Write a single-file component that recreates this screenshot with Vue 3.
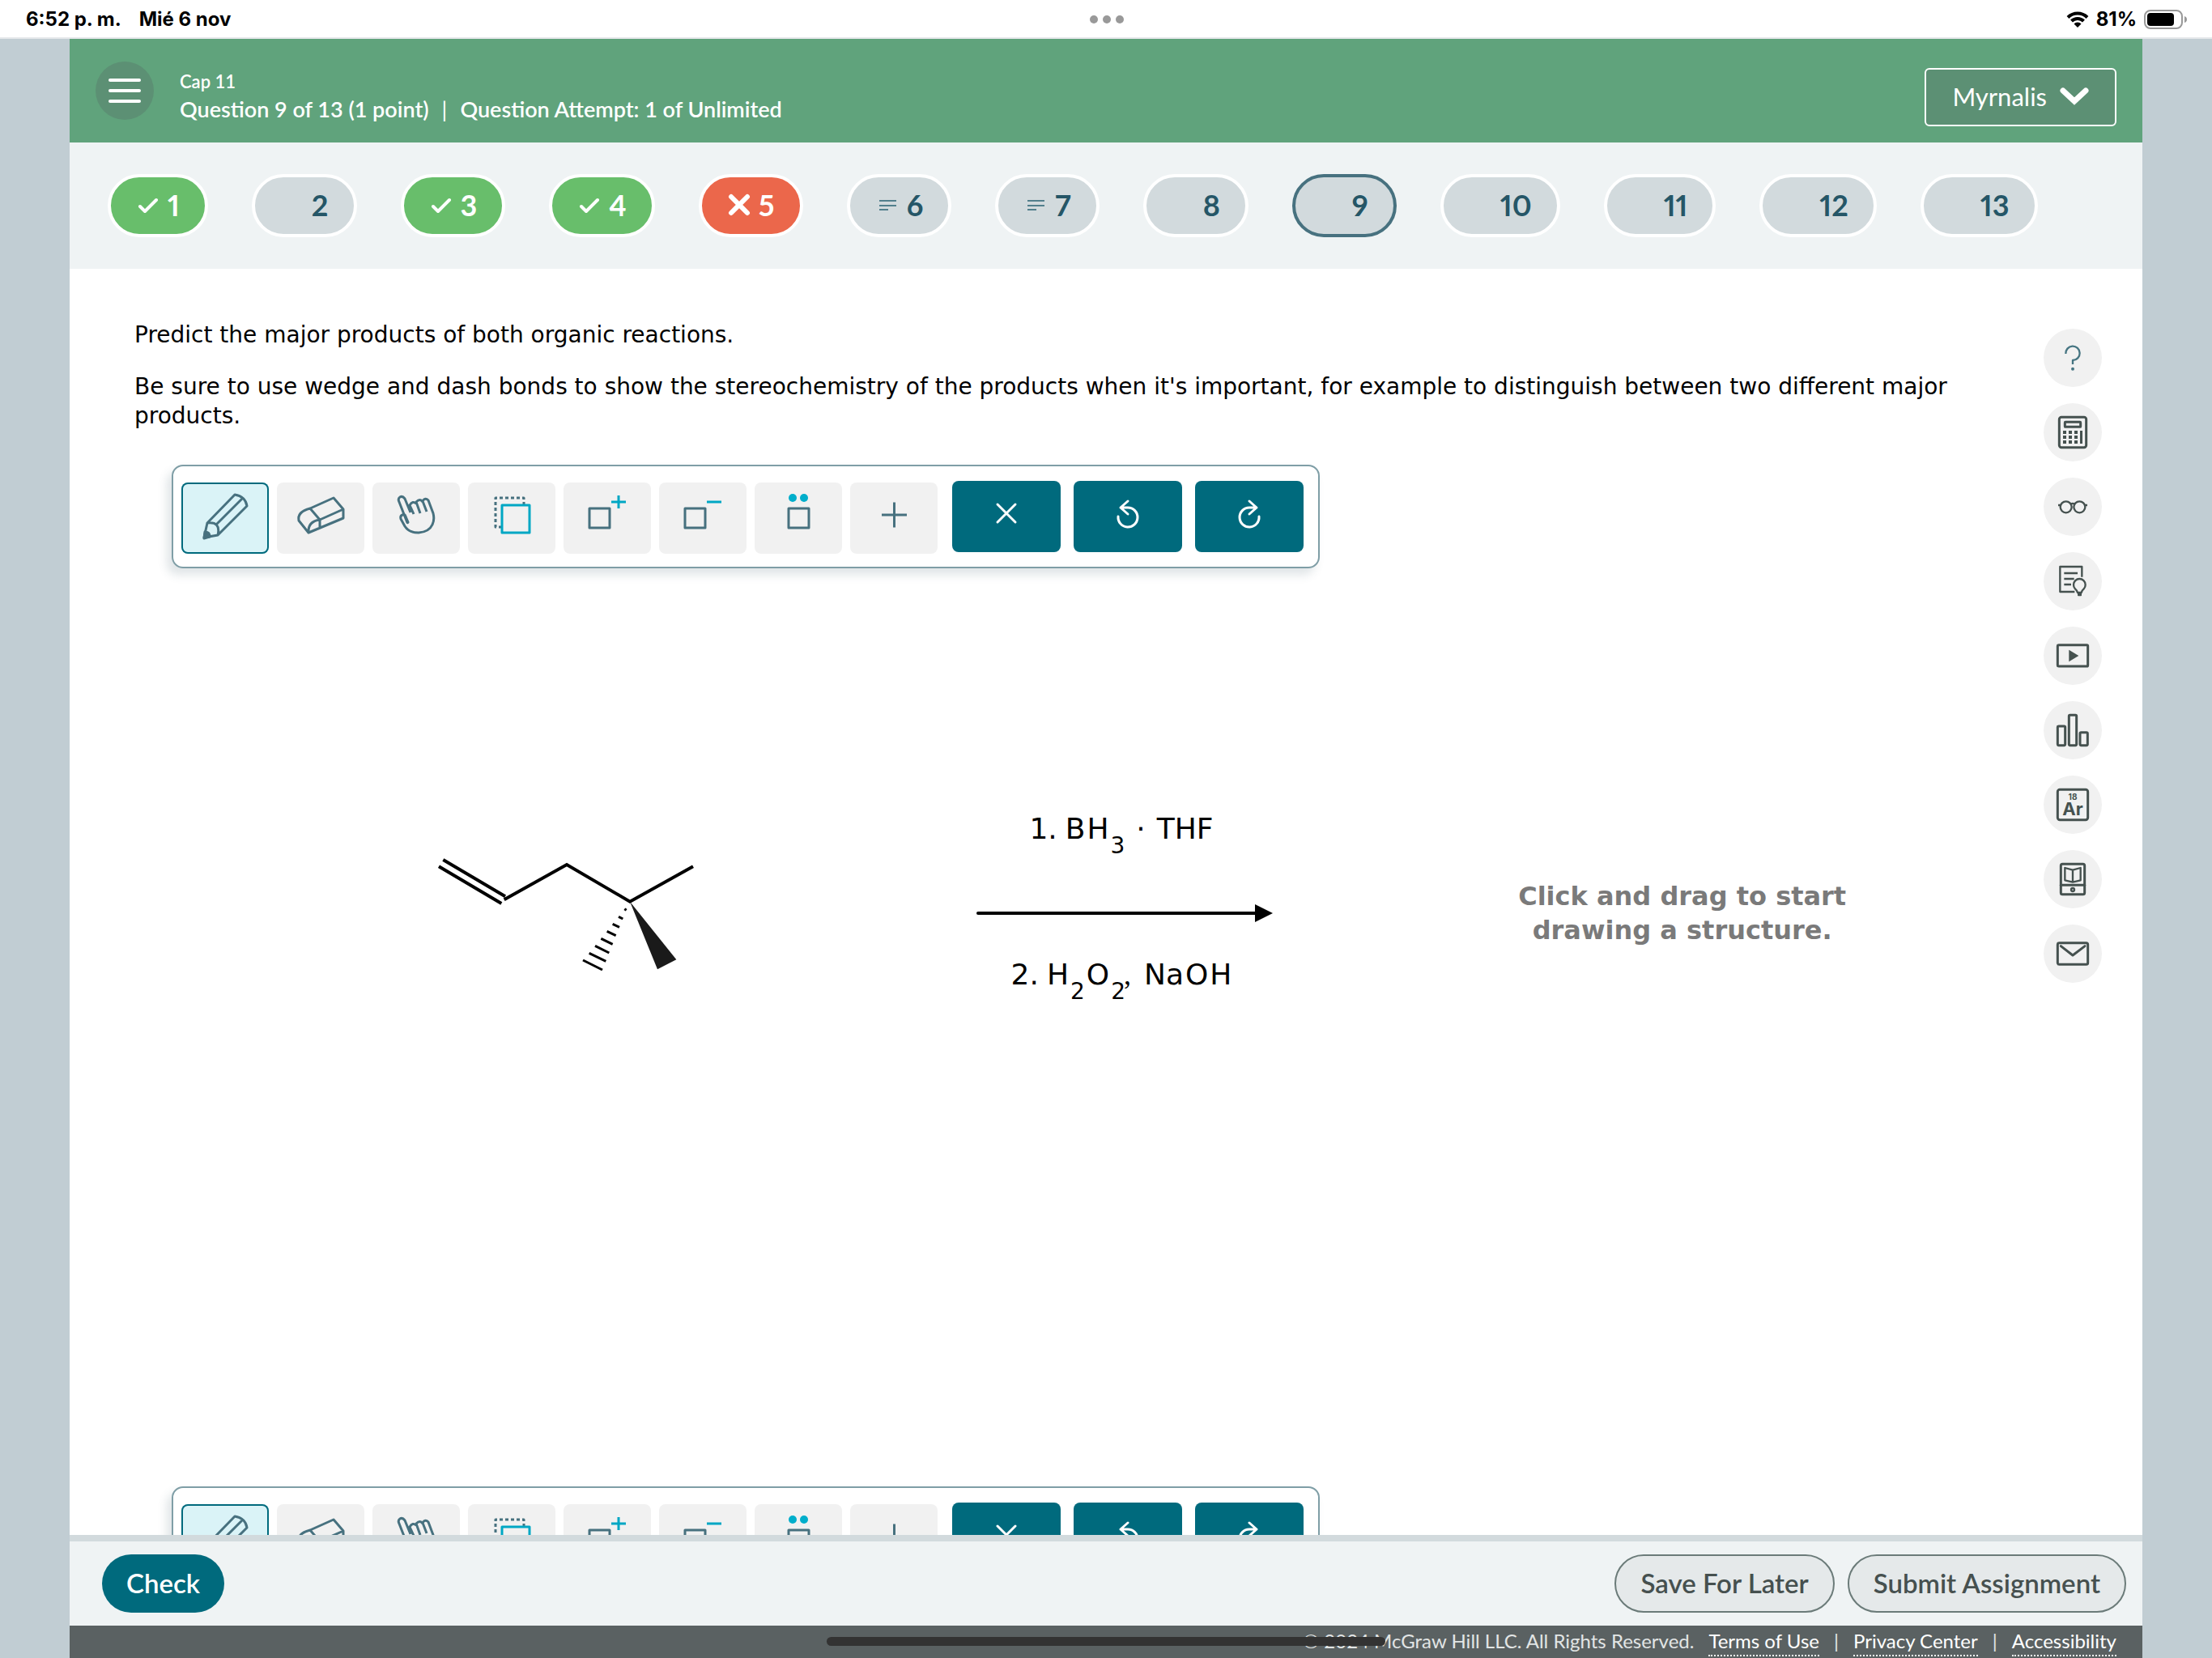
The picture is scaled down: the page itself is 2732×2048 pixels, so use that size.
<script setup>
const questions = [
	{ id: 1, status: 'correct' },
	{ id: 2 },
	{ id: 3, status: 'correct' },
	{ id: 4, status: 'correct' },
	{ id: 5, status: 'wrong' },
	{ id: 6, status: 'partial' },
	{ id: 7, status: 'partial' },
	{ id: 8 },
	{ id: 9, status: 'current' },
	{ id: 10 },
	{ id: 11 },
	{ id: 12 },
	{ id: 13 },
];

const tools = ['Pencil', 'Eraser', 'Move', 'Select', 'Add charge', 'Remove charge', 'Lone pair', 'More'];
const actions = ['Clear', 'Undo', 'Redo'];
// one toolbar for each reaction
const toolbars = [1, 2];

// [x1, y1, x2, y2] of every rung in the hashed bond
const hashes = [
	[814, 368, 821, 373],
	[792, 397, 808, 405],
	[770, 424, 795, 436],
	[749, 451, 782, 467],
	[727, 478, 770, 499],
	[705, 505, 757, 531],
	[683, 532, 745, 562],
	[660, 558, 732, 594],
];

const keys = [0, 1, 2].flatMap((row) => [0, 1, 2].map((col) => ({ x: 72 + col * 21, y: 102 + row * 18 })));

const side = ['Help', 'Calculator', 'Accessible view', 'Hints', 'Video', 'Data', 'Periodic table', 'eBook', 'Message'];
const links = ['Terms of Use', 'Privacy Center', 'Accessibility'];
</script>

<template>
	<div class="screen">
		<div class="status-bar">
			<div class="status-time"><span>6:52 p. m.</span><span>Mié 6 nov</span></div>
			<div class="status-dots"><i></i><i></i><i></i></div>
			<div class="status-right">
				<svg class="wifi" viewBox="0 0 28 20">
					<path d="M2 7.500 A17 17 0 0 1 26 7.500" />
					<path d="M6.500 12 A10.600 10.600 0 0 1 21.500 12" />
					<path class="fill" d="M14 20 L9.500 15.400 A6.400 6.400 0 0 1 18.500 15.400 Z" />
				</svg>
				<span>81%</span>
				<svg class="battery" viewBox="0 0 54 24">
					<rect class="shell" x="1" y="1" width="46" height="22" rx="7" />
					<rect x="4" y="4" width="33" height="16" rx="4" />
					<path class="cap" d="M50 8 Q53 9 53 12 Q53 15 50 16 Z" />
				</svg>
			</div>
		</div>

		<div class="page">
			<header class="header">
				<button class="menu" aria-label="Menu"><i></i><i></i><i></i></button>
				<div class="titles">
					<div class="chapter">Cap 11</div>
					<div class="progress">
						<span>Question 9 of 13 (1 point)</span><span class="bar">|</span><span>Question Attempt: 1 of Unlimited</span>
					</div>
				</div>
				<button class="user">
					Myrnalis
					<svg viewBox="0 0 36 24"><path d="M4 5 L18 18 L32 5" /></svg>
				</button>
			</header>

			<nav class="questions">
				<button v-for="q in questions" :key="q.id" class="pill" :class="q.status">
					<svg viewBox="0 0 28 28">
						<path v-if="q.status === 'correct'" d="M4 16 L10 22 L24 8" />
						<path v-else-if="q.status === 'wrong'" d="M4 4 L24 24 M24 4 L4 24" />
						<path v-else-if="q.status === 'partial'" d="M4 9 H25 M4 15 H25 M4 20 H15" />
					</svg>
					<span>{{ q.id }}</span>
				</button>
			</nav>

			<main class="content">
				<div class="main">
					<p>Predict the major products of both organic reactions.</p>
					<p>
						Be sure to use wedge and dash bonds to show the stereochemistry of the products when it's important, for
						example to distinguish between two different major products.
					</p>

					<template v-for="bar in toolbars" :key="bar">
						<div class="toolbar">
							<button v-for="(tool, i) in tools" :key="tool" class="tool" :class="{ active: i === 0 }" :aria-label="tool">
								<svg viewBox="0 0 108 88">
									<g v-if="tool === 'Pencil'">
										<path d="M66 15 Q79 17 81 29 L45 65 L28 68 L32 50 Z M32 50 Q49 48 45 65 M43 52 L75 20" />
										<path class="solid" d="M29 61 Q35 61 35 67 L28 69 Z" />
									</g>
									<path
										v-else-if="tool === 'Eraser'"
										d="M70 19 L82 33 V44 L39 62 L27 47 Q25 36 41 32 Z M41 32 L53 46 L82 33 M53 46 V56 M53 46 Q38 48 39 62"
									/>
									<path
										v-else-if="tool === 'Move'"
										d="M47 37 L40 20 Q37 16 34 18 Q31 20 33 24 L42 47 Q43 51 44 49 L41 42 Q40 38 37 40 Q34 41 35 45 L40 54 Q45 62 57 62 Q70 61 74 52 Q77 46 75 38 L69 22 Q65 18 62 23 L67 36 M62 24 Q59 19 54 24 L59 38 M54 26 Q50 22 46 28 L51 39"
									/>
									<g v-else-if="tool === 'Select'">
										<path class="dashed" d="M69 28 V19 H34 V55 H41" />
										<rect class="cyan" x="42" y="28" width="34" height="34" />
									</g>
									<g v-else-if="tool === 'Add charge'">
										<rect x="32" y="32" width="25" height="24" />
										<path class="cyan" d="M59 24 H77 M68 16 V32" />
									</g>
									<g v-else-if="tool === 'Remove charge'">
										<rect x="32" y="32" width="25" height="24" />
										<path class="cyan" d="M59 24 H77" />
									</g>
									<g v-else-if="tool === 'Lone pair'">
										<rect x="42" y="32" width="25" height="24" />
										<circle class="dot" cx="47" cy="19" r="5" />
										<circle class="dot" cx="61" cy="19" r="5" />
									</g>
									<path v-else d="M39 40 H70 M54.500 24.500 V55.500" />
								</svg>
							</button>
							<div class="actions">
								<button v-for="action in actions" :key="action" class="action" :aria-label="action">
									<svg viewBox="0 0 134 88">
										<path v-if="action === 'Clear'" d="M56 29 L78 51 M78 29 L56 51" />
										<path v-else-if="action === 'Undo'" d="M55 44 A12 12 0 1 0 67 33 H58 M67 25 L58 33 L67 41" />
										<path v-else d="M79 44 A12 12 0 1 1 67 33 H76 M67 25 L76 33 L67 41" />
									</svg>
								</button>
							</div>
						</div>

						<div v-if="bar === 1" class="reaction">
							<div class="cell">
								<svg class="molecule" viewBox="0 24 1200 720">
									<path d="M142 186 L372 322 M126 211 L358 348 M368 334 L600 204 L834 341 L1068 211" />
									<line v-for="h in hashes" :key="h[0]" class="hash" :x1="h[0]" :y1="h[1]" :x2="h[2]" :y2="h[3]" />
									<polygon points="834,341 1006,556 936,592" />
								</svg>
							</div>
							<div class="cell reagents">
								<div class="formula">
									<span class="step">1.</span><span>B</span><span>H</span><sub>3</sub><span class="mid">·</span
									><span>THF</span>
								</div>
								<svg class="arrow" viewBox="0 0 366 24">
									<path d="M2 12 H346" />
									<polygon points="344,1 366,12 344,23" />
								</svg>
								<div class="formula">
									<span class="step">2.</span><span>H</span><sub>2</sub><span>O</span><sub>2</sub
									><span class="comma">,</span><span>Na</span><span>O</span><span>H</span>
								</div>
							</div>
							<div class="cell hint">Click and drag to start<br />drawing a structure.</div>
						</div>
					</template>
				</div>

				<aside class="side">
					<button v-for="item in side" :key="item" :aria-label="item">
						<svg viewBox="0 0 216 216">
							<g v-if="item === 'Help'" class="help">
								<path d="M82 93 A26 26 0 1 1 108 117 V132" />
								<circle class="solid" cx="108" cy="149" r="6" />
							</g>
							<g v-else-if="item === 'Calculator'">
								<rect x="58" y="52" width="100" height="112" rx="8" />
								<rect x="79" y="70" width="58" height="18" rx="2" />
								<rect v-for="k in keys" :key="k.x + '-' + k.y" class="solid" :x="k.x" :y="k.y" width="12" height="12" />
								<rect class="solid" x="135" y="102" width="9" height="48" />
							</g>
							<g v-else-if="item === 'Accessible view'" class="thin">
								<circle cx="83" cy="109" r="21" />
								<circle cx="133" cy="109" r="21" />
								<path d="M54 102 H64 M152 102 H162 M100 98 Q108 93 116 98" />
							</g>
							<g v-else-if="item === 'Hints'" class="thin">
								<path d="M142 92 V54 H61 V147 H115 M76 78 H126 M76 99 H113 M76 120 H102" />
								<path d="M126 150 Q125 143 117 136 A22 22 0 1 1 149 136 Q141 143 140 150 Z" />
								<rect class="solid" x="126" y="150" width="15" height="13" rx="3" />
							</g>
							<g v-else-if="item === 'Video'">
								<rect x="52" y="68" width="112" height="79" rx="4" />
								<path class="solid" d="M94 86 L130 108 L94 130 Z" />
							</g>
							<g v-else-if="item === 'Data'">
								<rect x="52" y="93" width="28" height="71" rx="4" />
								<rect x="94" y="52" width="28" height="112" rx="4" />
								<rect x="135" y="116" width="28" height="48" rx="4" />
							</g>
							<g v-else-if="item === 'Periodic table'">
								<rect x="52" y="52" width="112" height="112" rx="8" />
								<text x="108" y="90" font-size="30">18</text>
								<text x="108" y="147" font-size="66">Ar</text>
							</g>
							<g v-else-if="item === 'eBook'">
								<rect x="64" y="52" width="88" height="112" rx="6" />
								<path d="M64 130 H152" />
								<path class="thin" d="M79 66 L108 74 L137 66 V112 L108 119 L79 112 Z M108 74 V119" />
								<circle class="thin" cx="108" cy="147" r="6" />
							</g>
							<g v-else>
								<rect x="52" y="68" width="112" height="80" rx="6" />
								<path d="M64 80 L108 114 L153 80" />
							</g>
						</svg>
					</button>
				</aside>
			</main>

			<div class="bottom">
				<button class="check">Check</button>
				<button class="later">Save For Later</button>
				<button class="later">Submit Assignment</button>
			</div>

			<footer class="footer">
				<span>© 2024 McGraw Hill LLC. All Rights Reserved.</span>
				<template v-for="(link, i) in links" :key="link">
					<span v-if="i > 0">|</span>
					<a href="#">{{ link }}</a>
				</template>
			</footer>
		</div>
		<div class="home-indicator"></div>
	</div>
</template>

<style>
body {
	margin: 0;
}
</style>

<style scoped>
.screen {
	position: relative;
	display: flex;
	flex-direction: column;
	height: 100vh;
	overflow: hidden;
	background: #c1cdd3;
	font-family: Lato, sans-serif;
}

button {
	margin: 0;
	padding: 0;
	border: 0;
	font-family: inherit;
	cursor: pointer;
}

svg {
	display: block;
	fill: none;
}

.status-bar {
	display: grid;
	grid-template-columns: 1fr auto 1fr;
	align-items: center;
	height: 46px;
	flex: none;
	padding: 0 30px 0 32px;
	border-bottom: 2px solid #e6e8eb;
	background: #fff;
	color: #000;
	font: 700 24px/48px Inter, sans-serif;
}

.status-time {
	display: flex;
	gap: 22px;
}

.status-dots {
	display: flex;
	gap: 6px;
}

.status-dots i {
	width: 10px;
	height: 10px;
	border-radius: 50%;
	background: #999;
}

.status-right {
	display: flex;
	justify-content: flex-end;
	align-items: center;
	gap: 9px;
}

.wifi {
	width: 28px;
	height: 20px;
	stroke: #000;
	stroke-width: 4;
}

.wifi .fill {
	fill: #000;
	stroke: none;
}

.battery {
	width: 54px;
	height: 24px;
	fill: #000;
}

.battery .shell {
	fill: none;
	stroke: #999;
	stroke-width: 2;
}

.battery .cap {
	fill: #999;
}

.page {
	display: flex;
	flex-direction: column;
	flex: 1;
	min-height: 0;
	margin: 0 86px;
	background: #fff;
}

.header {
	display: flex;
	flex: none;
	align-items: flex-start;
	height: 100px;
	padding: 28px 32px 0;
	background: #60a37c;
	color: #fff;
}

.menu {
	display: flex;
	flex-direction: column;
	align-items: center;
	justify-content: center;
	gap: 9px;
	width: 72px;
	height: 72px;
	border-radius: 50%;
	background: #5c9074;
}

.menu i {
	width: 40px;
	height: 4px;
	border-radius: 2px;
	background: #fff;
}

.titles {
	flex: 1;
	padding: 8px 32px 0;
}

.chapter {
	font-size: 22px;
	font-weight: 600;
	line-height: 34px;
}

.progress {
	display: flex;
	font-size: 27px;
	font-weight: 600;
	line-height: 34px;
}

.bar {
	padding: 0 16px;
	font-weight: 400;
}

.user {
	display: flex;
	align-items: center;
	gap: 16px;
	height: 72px;
	margin-top: 8px;
	padding: 0 32px 2px;
	border: 2px solid #fff;
	border-radius: 6px;
	background: #5c9074;
	color: #fff;
	font-size: 31px;
}

.user svg {
	width: 36px;
	height: 24px;
	stroke: #fff;
	stroke-width: 7;
	stroke-linecap: round;
}

.questions {
	display: flex;
	flex: none;
	gap: 54px;
	padding: 39px 47px;
	background: #eff3f4;
}

.pill {
	display: flex;
	align-items: center;
	gap: 10px;
	height: 78px;
	padding: 0 31px 2px 32px;
	border: 4px solid #fff;
	border-radius: 39px;
	background: #d2dadd;
	color: #255667;
	font-size: 36px;
	font-weight: 700;
	font-variant-numeric: proportional-nums;
}

.pill svg {
	width: 28px;
	height: 28px;
	stroke: #fff;
	stroke-width: 4;
	stroke-linecap: round;
	stroke-linejoin: round;
}

.pill.correct {
	background: #68be6b;
	color: #fff;
}

.pill.wrong {
	background: #eb674b;
	color: #fff;
}

.pill.wrong svg {
	stroke-width: 6;
}

.pill.partial svg {
	stroke: #527f8c;
	stroke-width: 2;
	stroke-linecap: butt;
}

.pill.current {
	border-color: #47717f;
}

.content {
	display: flex;
	flex: 1;
	gap: 102px;
	min-height: 0;
	overflow: hidden;
	padding: 64px 50px 0 80px;
}

.main {
	flex: 1;
	min-width: 0;
	color: #000;
	font-family: 'DejaVu Sans', sans-serif;
}

.main p {
	margin: 0 0 28px;
	font-size: 28px;
	line-height: 36px;
}

.toolbar {
	display: flex;
	align-items: center;
	gap: 10px;
	width: fit-content;
	height: 124px;
	margin: 42px 0 0 46px;
	padding: 0 18px 0 10px;
	border: 2px solid #7f9ea6;
	border-radius: 14px;
	box-shadow: -6px 8px 12px rgba(60, 95, 105, 0.16);
}

.tool {
	box-sizing: border-box;
	width: 108px;
	height: 88px;
	margin-top: 4px;
	border-radius: 8px;
	background: #f1f1f1;
}

.tool.active {
	background: #daf3f7;
	box-shadow: inset 0 0 0 2px #006a7d;
}

.tool svg {
	width: 108px;
	height: 88px;
	stroke: #47717f;
	stroke-width: 3;
	stroke-linejoin: round;
}

.tool .solid {
	fill: #47717f;
}

.tool .cyan {
	stroke: #00a7c4;
}

.tool .dashed {
	stroke-dasharray: 4 3;
}

.tool .dot {
	fill: #00aecb;
	stroke: none;
}

.actions {
	display: flex;
	gap: 16px;
	margin-left: 8px;
}

.action {
	height: 88px;
	border-radius: 8px;
	background: #006a7d;
}

.action svg {
	width: 134px;
	height: 88px;
	stroke: #fff;
	stroke-width: 3;
	stroke-linecap: round;
	stroke-linejoin: round;
}

.reaction {
	display: grid;
	grid-template-columns: repeat(3, 1fr);
	align-items: center;
	min-height: 852px;
	margin: 0 0 282px 190px;
}

.cell {
	display: flex;
	justify-content: center;
}

.molecule {
	width: 400px;
	height: 240px;
	stroke: #000;
	stroke-width: 12;
}

.molecule .hash {
	stroke-width: 9;
}

.molecule polygon {
	fill: #1a1a1a;
	stroke: none;
}

.reagents {
	flex-direction: column;
	align-items: center;
	padding-bottom: 28px;
}

.formula {
	display: flex;
	align-items: baseline;
	gap: 2px;
	padding-right: 8px;
	font-size: 36px;
	line-height: 44px;
}

.formula .step {
	margin-right: 8px;
}

.formula sub {
	position: relative;
	top: 18px;
	font-size: 28px;
	line-height: 28px;
	vertical-align: baseline;
}

.formula .mid {
	margin: 0 12px;
}

.formula .comma {
	margin: 0 14px 0 -4px;
	font-family: 'Liberation Serif', serif;
}

.arrow {
	width: 366px;
	height: 24px;
	margin: 70px 0 42px;
	stroke: #000;
	stroke-width: 4;
	stroke-linecap: round;
}

.arrow polygon {
	fill: #000;
	stroke: none;
}

.hint {
	color: #7a7a7a;
	font-size: 32px;
	font-weight: 700;
	line-height: 42px;
	text-align: center;
}

.side {
	display: flex;
	flex: none;
	flex-direction: column;
	gap: 20px;
	padding-top: 10px;
}

.side button {
	width: 72px;
	height: 72px;
	border-radius: 50%;
	background: #f1f1f1;
}

.side svg {
	width: 72px;
	height: 72px;
	stroke: #45514f;
	stroke-width: 9;
	stroke-linejoin: round;
	stroke-linecap: round;
}

.side .solid {
	fill: #45514f;
	stroke: none;
}

.side .thin {
	stroke-width: 7;
	stroke-linecap: butt;
}

.side .help {
	stroke: #467582;
	stroke-width: 7;
	stroke-linecap: butt;
}

.side .help .solid {
	fill: #467582;
}

.side text {
	fill: #45514f;
	stroke: none;
	font-family: Inter, sans-serif;
	font-weight: 700;
	text-anchor: middle;
}

.bottom {
	display: flex;
	flex: none;
	gap: 16px;
	padding: 16px 20px 16px 40px;
	border-top: 8px solid #d2dadd;
	background: #eff3f4;
}

.bottom button {
	box-sizing: border-box;
	height: 72px;
	padding: 0 30px 2px;
	border-radius: 36px;
	font-size: 33px;
	font-weight: 600;
}

.bottom .check {
	margin-right: auto;
	background: #006a7d;
	color: #fff;
}

.bottom .later {
	border: 2px solid #6b7b79;
	background: #e5e9ea;
	color: #46504f;
}

.footer {
	display: flex;
	flex: none;
	align-items: flex-start;
	justify-content: flex-end;
	gap: 18px;
	height: 40px;
	padding: 0 32px;
	overflow: hidden;
	background: #5a6162;
	color: #e2e5e5;
	font-size: 24px;
	line-height: 38px;
}

.footer a {
	box-sizing: border-box;
	height: 38px;
	border-bottom: 2px dotted #fff;
	color: #fff;
	text-decoration: none;
}

.home-indicator {
	position: absolute;
	bottom: 15px;
	left: 50%;
	width: 690px;
	height: 11px;
	border-radius: 6px;
	background: #333;
	transform: translateX(-50%);
}
</style>
